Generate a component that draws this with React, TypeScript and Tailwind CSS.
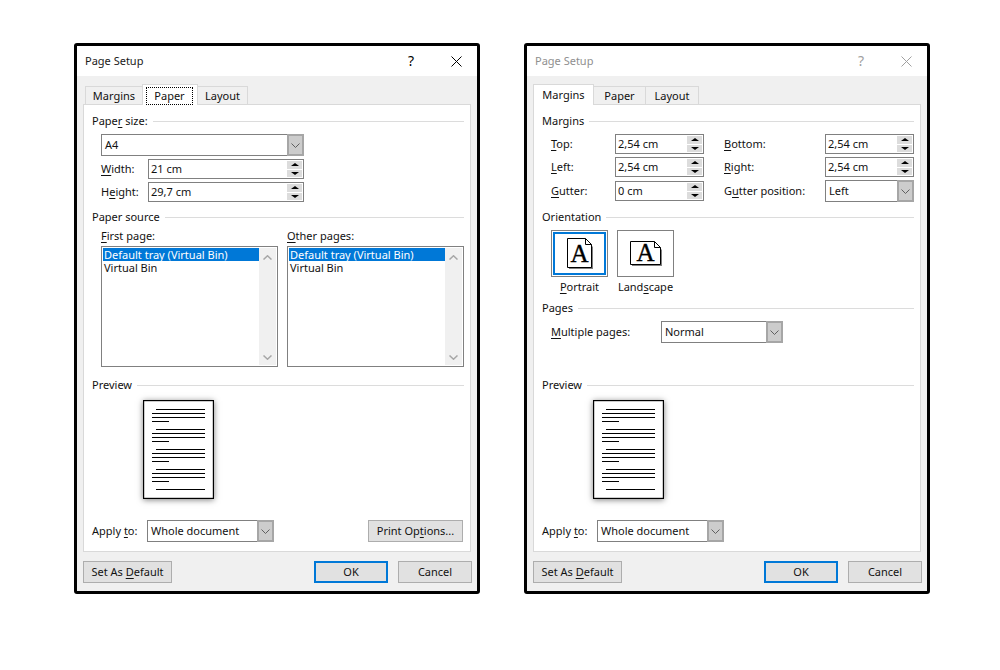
import type { ReactNode } from 'react'

const BTN = 'flex items-center justify-center h-[22px] bg-[#e1e1e1] border'

function Key({ children }: { children: ReactNode }) {
  return <span className="underline underline-offset-2">{children}</span>
}

function Chevron({ color = '#5f5f5f' }: { color?: string }) {
  return (
    <svg width="9" height="5" viewBox="0 0 9 5" fill="none" stroke={color} strokeWidth="1">
      <path d="M0.5 0.5 L4.5 4.5 L8.5 0.5" />
    </svg>
  )
}

function Heading({ children, className = '' }: { children: ReactNode; className?: string }) {
  return (
    <div className={`flex items-center h-4 gap-[5px] ${className}`}>
      <span className="whitespace-nowrap">{children}</span>
      <div className="flex-1 h-px bg-[#dcdcdc]" />
    </div>
  )
}

// dropdown with the grey arrow box at the right end
function Select({ value, className = '' }: { value: string; className?: string }) {
  return (
    <div className={`flex h-[22px] bg-white border border-[#808080] ${className}`}>
      <span className="flex-1 pl-[3px] leading-[20px]">{value}</span>
      <div className="w-[17px] -my-px -mr-px flex items-center justify-center bg-[#cccccc] border-2 border-[#a6a6a6]">
        <Chevron />
      </div>
    </div>
  )
}

function Spinner({ value, className = '' }: { value: string; className?: string }) {
  return (
    <div className={`flex h-5 bg-white border border-[#808080] ${className}`}>
      <span className="flex-1 pl-[2px] leading-[18px]">{value}</span>
      <div className="w-[15px] my-px mr-px flex flex-col gap-px">
        <div className="flex-1 flex items-center justify-center bg-[#dcdcdc]">
          <div className="w-0 h-0 border-x-[4px] border-x-transparent border-b-[3px] border-b-black" />
        </div>
        <div className="flex-1 flex items-center justify-center bg-[#dcdcdc]">
          <div className="w-0 h-0 border-x-[4px] border-x-transparent border-t-[3px] border-t-black" />
        </div>
      </div>
    </div>
  )
}

function TrayList() {
  return (
    <div className="flex h-[121px] bg-white border border-[#808080] p-px">
      <div className="flex-1 leading-[13px]">
        <div className="bg-[#0078d7] text-white pl-px">Default tray (Virtual Bin)</div>
        <div className="pl-px">Virtual Bin</div>
      </div>
      <div className="w-[17px] flex flex-col items-center justify-between pt-[7px] pb-[5px] bg-[#f0f0f0]">
        <svg width="9" height="5" viewBox="0 0 9 5" fill="none" stroke="#a6a6a6" strokeWidth="1.5">
          <path d="M0.5 4.5 L4.5 0.8 L8.5 4.5" />
        </svg>
        <svg width="9" height="5" viewBox="0 0 9 5" fill="none" stroke="#a6a6a6" strokeWidth="1.5">
          <path d="M0.5 0.5 L4.5 4.2 L8.5 0.5" />
        </svg>
      </div>
    </div>
  )
}

// little page thumbnail in the Preview group
function PreviewPage() {
  const tops = [9, 29, 49, 69]
  return (
    <div className="w-[71px] h-[99px] ml-[51px] mt-[7px] shadow-[0_1px_6px_rgba(0,0,0,0.5)]">
      <svg width="71" height="99" viewBox="0 0 71 99">
        <rect x="0.6" y="0.6" width="69.8" height="97.8" fill="#fff" stroke="#000" strokeWidth="1.2" />
        {tops.map((y) => (
          <g key={y} fill="#000">
            <rect x="13" y={y} width="49" height="1" />
            <rect x="9" y={y + 4} width="53" height="1" />
            <rect x="9" y={y + 8} width="53" height="1" />
            <rect x="9" y={y + 12} width="17" height="1" />
          </g>
        ))}
        <rect x="13" y="89" width="49" height="1" fill="#000" />
      </svg>
    </div>
  )
}

function ApplyRow({ printOptions }: { printOptions?: boolean }) {
  return (
    <div className="flex items-center h-[22px] mt-[21px]">
      <span className="w-[55px]">
        Apply <Key>t</Key>o:
      </span>
      <Select value="Whole document" className="w-[127px]" />
      {printOptions && (
        <div className={`${BTN} border-[#adadad] w-[95px] ml-auto mr-px`}>
          <span>
            Print Op<Key>t</Key>ions...
          </span>
        </div>
      )}
    </div>
  )
}

function Dialog({
  faded,
  tabs,
  children,
}: {
  faded?: boolean
  tabs: ReactNode
  children: ReactNode
}) {
  const chrome = faded ? '#a0a0a0' : '#000'
  return (
    <div className="w-[406px] h-[551px] flex flex-col bg-[#f0f0f0] border-[3px] border-black rounded-[3px]">
      <div className="flex items-center h-[30px] bg-white pl-[8px] shrink-0">
        <span className={`flex-1 ${faded ? 'text-[#8f8f8f]' : 'text-[#1a1a1a]'}`}>Page Setup</span>
        <span className="w-[14px] text-center text-[14px]" style={{ color: chrome }}>
          ?
        </span>
        <svg className="ml-[33px] mr-[15px]" width="11" height="11" viewBox="0 0 11 11" stroke={chrome} strokeWidth="1">
          <path d="M0.5 0.5 L10.5 10.5 M10.5 0.5 L0.5 10.5" />
        </svg>
      </div>
      <div className="flex items-end h-[28px] pl-[8px] shrink-0">{tabs}</div>
      <div className="mx-[6px] h-[448px] bg-white border border-[#d9d9d9] pt-[8px] pl-[8px] pr-[6px] shrink-0">
        {children}
      </div>
      <div className="flex items-center mt-[9px] mx-[6px] mr-[5px]">
        <div className={`${BTN} border-[#adadad] w-[89px]`}>
          <span>
            Set As <Key>D</Key>efault
          </span>
        </div>
        <div className={`${BTN} w-[74px] ml-auto border-2 border-[#0078d7]`}>OK</div>
        <div className={`${BTN} border-[#adadad] w-[74px] ml-[10px]`}>Cancel</div>
      </div>
    </div>
  )
}

function PaperPanel() {
  return (
    <>
      <Heading>
        Pape<Key>r</Key> size:
      </Heading>
      <Select value="A4" className="ml-[9px] w-[203px] mt-[5px]" />
      <div className="flex items-center ml-[9px] w-[203px] mt-[3px]">
        <span className="w-[47px]">
          <Key>W</Key>idth:
        </span>
        <Spinner value="21 cm" className="flex-1" />
      </div>
      <div className="flex items-center ml-[9px] w-[203px] mt-[3px]">
        <span className="w-[47px]">
          H<Key>e</Key>ight:
        </span>
        <Spinner value="29,7 cm" className="flex-1" />
      </div>
      <Heading className="mt-[7px]">Paper source</Heading>
      <div className="grid grid-cols-[177px_177px] gap-x-[9px] ml-[9px] mt-[3px]">
        <div className="h-4 mb-[2px]">
          <Key>F</Key>irst page:
        </div>
        <div className="h-4 mb-[2px]">
          <Key>O</Key>ther pages:
        </div>
        <TrayList />
        <TrayList />
      </div>
      <Heading className="mt-[10px]">Preview</Heading>
      <PreviewPage />
      <ApplyRow printOptions />
    </>
  )
}

function PortraitIcon() {
  return (
    <svg className="overflow-visible" width="26" height="31" viewBox="0 0 26 31">
      <path d="M2 2 H19 L26 9 V31 H2 Z" fill="#7f7f7f" />
      <path d="M0.5 0.5 H18.5 L24.5 6.5 V29.5 H0.5 Z" fill="#fff" stroke="#000" />
      <path d="M18.5 0.5 V6.5 H24.5" fill="none" stroke="#000" />
      <text x="12.5" y="23.5" textAnchor="middle" fontFamily="'Liberation Serif', serif" fontSize="25" fill="#000" stroke="#000" strokeWidth="0.4">
        A
      </text>
    </svg>
  )
}

function LandscapeIcon() {
  return (
    <svg className="overflow-visible" width="32" height="25" viewBox="0 0 32 25">
      <path d="M2 2 H25 L32 9 V25 H2 Z" fill="#7f7f7f" />
      <path d="M0.5 0.5 H24.5 L30.5 6.5 V23.5 H0.5 Z" fill="#fff" stroke="#000" />
      <path d="M24.5 0.5 V6.5 H30.5" fill="none" stroke="#000" />
      <text x="15.5" y="19.5" textAnchor="middle" fontFamily="'Liberation Serif', serif" fontSize="25" fill="#000" stroke="#000" strokeWidth="0.4">
        A
      </text>
    </svg>
  )
}

function MarginsPanel() {
  return (
    <>
      <Heading>Margins</Heading>
      <div className="grid grid-cols-[64px_89px_20px_101px_89px] ml-[9px] mt-[5px] items-center gap-y-[3px] w-[363px]">
        <span>
          <Key>T</Key>op:
        </span>
        <Spinner value="2,54 cm" />
        <span />
        <span>
          <Key>B</Key>ottom:
        </span>
        <Spinner value="2,54 cm" />
        <span>
          <Key>L</Key>eft:
        </span>
        <Spinner value="2,54 cm" />
        <span />
        <span>
          <Key>R</Key>ight:
        </span>
        <Spinner value="2,54 cm" />
        <span>
          <Key>G</Key>utter:
        </span>
        <Spinner value="0 cm" />
        <span />
        <span>
          G<Key>u</Key>tter position:
        </span>
        <Select value="Left" />
      </div>
      <Heading className="mt-[7px]">Orientation</Heading>
      <div className="grid grid-cols-[57px_57px] gap-x-[9px] ml-[9px] mt-[5px]">
        <div className="h-[47px] flex items-center justify-center border border-[#808080] outline-2 -outline-offset-[4px] outline-[#0078d7]">
          <PortraitIcon />
        </div>
        <div className="h-[47px] flex items-center justify-center border border-[#808080]">
          <LandscapeIcon />
        </div>
        <div className="h-4 mt-[2px] text-center whitespace-nowrap">
          <Key>P</Key>ortrait
        </div>
        <div className="h-4 mt-[2px] text-center whitespace-nowrap">
          Land<Key>s</Key>cape
        </div>
      </div>
      <Heading className="mt-[5px]">Pages</Heading>
      <div className="flex items-center ml-[9px] mt-[5px]">
        <span className="w-[110px]">
          <Key>M</Key>ultiple pages:
        </span>
        <Select value="Normal" className="w-[122px]" />
      </div>
      <Heading className="mt-[34px]">Preview</Heading>
      <PreviewPage />
      <ApplyRow />
    </>
  )
}

export default function App() {
  return (
    <div className="w-[1000px] h-[670px] bg-white pt-[43px] pl-[74px] flex gap-[44px] items-start font-['Noto_Sans','Open_Sans',sans-serif] text-[11px] leading-4 text-[#111] overflow-hidden">
      <Dialog
        tabs={
          <>
            <div className="w-[57px] h-[18px] flex items-center justify-center border border-r-0 border-b-0 border-[#d9d9d9]">
              Margins
            </div>
            <div className="relative z-10 -mb-px w-[56px] h-[21px] pl-[4px] pr-[5px] pt-[3px] bg-white border border-b-0 border-[#d9d9d9]">
              <div className="h-4 flex items-center justify-center outline-1 outline-dotted outline-black">Paper</div>
            </div>
            <div className="w-[50px] h-[18px] flex items-center justify-center border border-l-0 border-b-0 border-[#d9d9d9]">
              Layout
            </div>
          </>
        }
      >
        <PaperPanel />
      </Dialog>
      <Dialog
        faded
        tabs={
          <>
            <div className="relative z-10 -mb-px -ml-[2px] w-[61px] h-[21px] flex items-center justify-center bg-white border border-b-0 border-[#d9d9d9]">
              Margins
            </div>
            <div className="w-[52px] h-[18px] flex items-center justify-center border border-l-0 border-b-0 border-[#d9d9d9]">
              Paper
            </div>
            <div className="w-[53px] h-[18px] flex items-center justify-center border border-l-0 border-b-0 border-[#d9d9d9]">
              Layout
            </div>
          </>
        }
      >
        <MarginsPanel />
      </Dialog>
    </div>
  )
}
